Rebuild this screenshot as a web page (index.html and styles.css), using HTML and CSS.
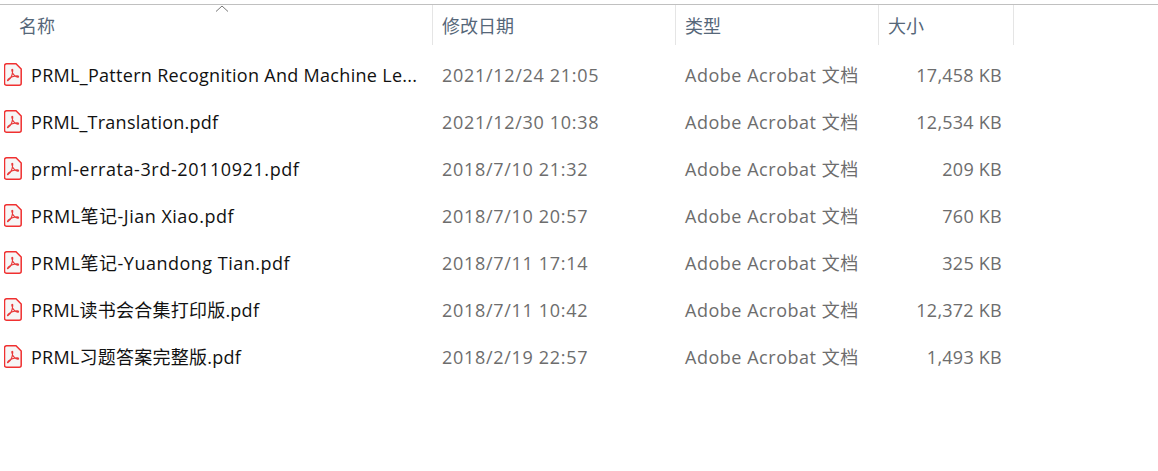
FILE: index.html
```html
<!DOCTYPE html>
<html lang="zh">
<head>
<meta charset="utf-8">
<title>PRML</title>
<link rel="stylesheet" href="styles.css">
</head>
<body>
<svg class="defs" width="0" height="0" aria-hidden="true">
  <symbol id="pdf" viewBox="0 0 18 23">
    <path d="M2.500 .8H12L17.200 6V20.200a2 2 0 0 1-2 2H2.500a2 2 0 0 1-2-2V2.800a2 2 0 0 1 2-2Z" fill="#f6f6f6" stroke="#f03030" stroke-width="1.500"/>
    <path d="M4 17.500C6.500 16 8.500 11.500 8.700 7.500C8.800 5.800 7.700 5.800 7.900 7.500C8.300 10.500 10.800 13.800 13.700 14.200C15 14.300 14.800 12.900 13.300 12.900C10 12.900 6 14.700 4.200 16.300C3.200 17.300 3.400 18 4 17.500Z" fill="none" stroke="#e83a3a" stroke-width="1.200"/>
  </symbol>
</svg>
<main class="explorer">
  <header class="head">
    <div class="hcell c-name">名称<svg class="sort" width="14" height="7" viewBox="0 0 14 7"><path d="M1 6.500L7 1L13 6.500" fill="none" stroke="#777" stroke-width="1"/></svg></div>
    <div class="hcell c-date">修改日期</div>
    <div class="hcell c-type">类型</div>
    <div class="hcell c-size">大小</div>
  </header>
  <div class="rows">
    <div class="row"><div class="c-name name"><svg class="ico"><use href="#pdf"/></svg><span>PRML_Pattern Recognition And Machine Le...</span></div><div class="c-date cell">2021/12/24 21:05</div><div class="c-type cell">Adobe Acrobat 文档</div><div class="c-size cell num">17,458 KB</div></div>
    <div class="row"><div class="c-name name tight"><svg class="ico"><use href="#pdf"/></svg><span>PRML_Translation.pdf</span></div><div class="c-date cell">2021/12/30 10:38</div><div class="c-type cell">Adobe Acrobat 文档</div><div class="c-size cell num">12,534 KB</div></div>
    <div class="row"><div class="c-name name digits"><svg class="ico"><use href="#pdf"/></svg><span>prml-errata-3rd-20110921.pdf</span></div><div class="c-date cell">2018/7/10 21:32</div><div class="c-type cell">Adobe Acrobat 文档</div><div class="c-size cell num">209 KB</div></div>
    <div class="row"><div class="c-name name wide"><svg class="ico"><use href="#pdf"/></svg><span>PRML笔记-Jian Xiao.pdf</span></div><div class="c-date cell">2018/7/10 20:57</div><div class="c-type cell">Adobe Acrobat 文档</div><div class="c-size cell num">760 KB</div></div>
    <div class="row"><div class="c-name name wide"><svg class="ico"><use href="#pdf"/></svg><span>PRML笔记-Yuandong Tian.pdf</span></div><div class="c-date cell">2018/7/11 17:14</div><div class="c-type cell">Adobe Acrobat 文档</div><div class="c-size cell num">325 KB</div></div>
    <div class="row"><div class="c-name name tight"><svg class="ico"><use href="#pdf"/></svg><span>PRML读书会合集打印版.pdf</span></div><div class="c-date cell">2018/7/11 10:42</div><div class="c-type cell">Adobe Acrobat 文档</div><div class="c-size cell num">12,372 KB</div></div>
    <div class="row"><div class="c-name name tight"><svg class="ico"><use href="#pdf"/></svg><span>PRML习题答案完整版.pdf</span></div><div class="c-date cell">2018/2/19 22:57</div><div class="c-type cell">Adobe Acrobat 文档</div><div class="c-size cell num">1,493 KB</div></div>
  </div>
</main>
</body>
</html>
```
FILE: styles.css
```css
* { box-sizing: border-box; }
html, body { margin: 0; height: 100%; background: #fff; overflow: hidden; }
body {
  padding-top: 4px;
  font-family: "Open Sans", "Noto Sans CJK SC", sans-serif;
  font-size: 18px;
  line-height: 24px;
}
.defs { display: block; height: 0; }
.explorer { border-top: 1px solid #c0c0c0; }
.head { display: flex; height: 40px; width: 1014px; }
.hcell {
  position: relative;
  display: flex;
  align-items: center;
  padding-top: 2px;
  padding-left: 9px;
  color: #566779;
  border-right: 1px solid #e5e5e5;
}
.c-name { width: 433px; flex: none; }
.c-date { width: 243px; flex: none; }
.c-type { width: 203px; flex: none; }
.c-size { width: 135px; flex: none; }
.head .c-name { padding-left: 19px; }
.sort { position: absolute; left: 215px; top: 0; }
.rows { padding-top: 6px; width: 1014px; }
.row { display: flex; height: 47px; align-items: center; }
.name { display: flex; align-items: center; color: #111; padding-left: 4px; white-space: nowrap; letter-spacing: .3px; }
.name.tight { letter-spacing: .24px; }
.name.wide { letter-spacing: .5px; }
.name.digits { letter-spacing: .59px; }
.ico { width: 18px; height: 23px; flex: none; margin-right: 9px; }
.cell { color: #6d6d6d; padding-left: 9px; white-space: nowrap; }
.c-date.cell { letter-spacing: .69px; }
.c-type.cell { letter-spacing: .53px; }
.num { text-align: right; padding-right: 12px; padding-left: 0; letter-spacing: .25px; }
```
